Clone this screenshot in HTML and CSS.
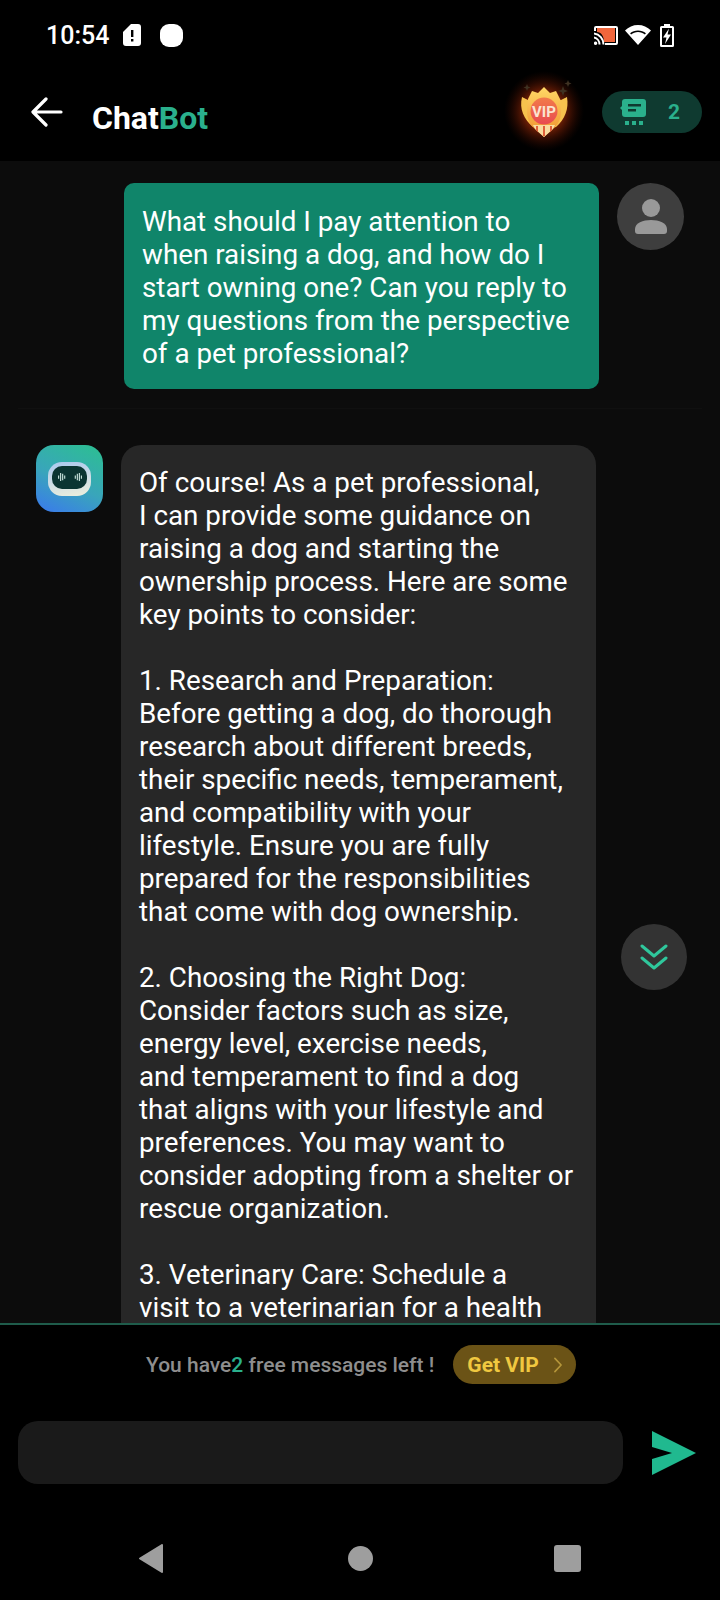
FILE: index.html
```html
<!DOCTYPE html>
<html lang="en">
<head>
  <meta charset="UTF-8">
  <meta name="viewport" content="width=device-width, initial-scale=1.0">
  <title>ChatBot</title>
  <link rel="stylesheet" href="styles.css">
</head>
<body>
  <div class="status-bar">
    <div class="status-left">
      <span class="clock">10:54</span>
      <svg class="sim-icon" viewBox="0 0 18 22"><path fill="#fff" fill-rule="evenodd" d="M8 0h7a3 3 0 0 1 3 3v16a3 3 0 0 1-3 3H3a3 3 0 0 1-3-3V8zM8 6v7h2.400V6zM8 15v2.600h2.400V15z"/></svg>
      <span class="notif-blob"></span>
    </div>
    <div class="status-right">
      <svg class="cast-icon" viewBox="0 0 24 19">
        <path fill="#f0663c" d="M3 2h18v14H10C10 10 7 6 3 6z"/>
        <path fill="none" stroke="#fff" stroke-width="2" d="M1 5V2a1 1 0 0 1 1-1h20a1 1 0 0 1 1 1v15a1 1 0 0 1-1 1H11"/>
        <path fill="none" stroke="#fff" stroke-width="2" d="M0 7.500a11 11 0 0 1 9.500 11M0 11.500a7 7 0 0 1 5.500 7"/>
        <circle cx="1.600" cy="17.200" r="1.700" fill="#fff"/>
      </svg>
      <svg class="wifi-icon" viewBox="0 0 26 20"><path fill="#fff" d="M13 20 0 5.500C3.500 2 8 0 13 0s9.500 2 13 5.500zM13 5.500c-3 0-5.700 1-7.900 2.800l1 1.100C8 7.900 10.400 7 13 7s5 .9 6.900 2.400l1-1.100C18.700 6.500 16 5.500 13 5.500z"/></svg>
      <svg class="battery-icon" viewBox="0 0 14 23">
        <path fill="#fff" d="M4 0h6v2h2.500A1.500 1.500 0 0 1 14 3.500v18a1.500 1.500 0 0 1-1.500 1.500h-11A1.500 1.500 0 0 1 0 21.500v-18A1.500 1.500 0 0 1 1.500 2H4z"/>
        <path fill="#000" d="M2 4h10v17H2z"/>
        <path fill="#fff" d="M9 4.500 3 13.500H6.500L5 20l6-9.500H7.500z"/>
      </svg>
    </div>
  </div>

  <header class="app-header">
    <svg class="back-arrow" viewBox="0 0 32 30"><path fill="none" stroke="#fff" stroke-width="3.200" stroke-linecap="round" stroke-linejoin="round" d="M30 15H3M15 2 2 15l13 13"/></svg>
    <h1 class="app-title">Chat<span class="accent">Bot</span></h1>
    <svg class="vip-badge" viewBox="0 0 80 80">
      <defs>
        <radialGradient id="vipGlow"><stop offset="0.450" stop-color="#c9380a" stop-opacity="0.600"/><stop offset="0.800" stop-color="#7a1c04" stop-opacity="0.220"/><stop offset="1" stop-color="#4a1002" stop-opacity="0"/></radialGradient>
        <linearGradient id="vipGold" x1="0" y1="0" x2="0" y2="1"><stop offset="0" stop-color="#ffd866"/><stop offset="1" stop-color="#f08f2c"/></linearGradient>
        <linearGradient id="vipCoin" x1="0" y1="0" x2="0" y2="1"><stop offset="0" stop-color="#f27b4a"/><stop offset="1" stop-color="#e84a50"/></linearGradient>
      </defs>
      <circle cx="40" cy="40" r="40" fill="url(#vipGlow)"/>
      <path fill="#f7c24e" d="M18 26l6 3 2-1c0 10 2 21 7 29l-4-1C20 48 15 38 18 26zM63 26l-6 3-2-1c0 10-2 21-7 29l4-1c9-8 13-18 11-30z"/>
      <path fill="url(#vipGold)" d="M40 16l6 6 6-2 4 8 1 13c0 7-3 12-6 15L40 66 29 56c-3-3-6-8-6-15l1-13 4-8 6 2z"/>
      <path fill="#f9dca0" d="M29 54h22l-2 4-9 8-9-8z"/>
      <path fill="#e0603a" d="M32 55h2v6l-2-2zM39 55h2v10h-2zM46 55h2v4l-2 2z"/>
      <circle cx="40" cy="40" r="13.500" fill="url(#vipCoin)"/>
      <text class="vip-text" x="40" y="45.500" text-anchor="middle">VIP</text>
      <path fill="#3f3222" d="M59 15l1.300 3.700 3.700 1.300-3.700 1.300-1.300 3.700-1.300-3.700-3.700-1.300 3.700-1.300zM64 9l1 2.500 2.500 1-2.500 1-1 2.500-1-2.500-2.500-1 2.500-1zM23 13l1 2.500 2.500 1-2.500 1-1 2.500-1-2.500-2.500-1 2.500-1z"/>
    </svg>
    <div class="credit-pill">
      <svg class="credit-icon" viewBox="0 0 26 26">
        <path fill="#2ab08c" d="M5 0h18a3 3 0 0 1 3 3v12a3 3 0 0 1-3 3H5a3 3 0 0 1-3-3v-4L0 9l2-2V3a3 3 0 0 1 3-3z"/>
        <path fill="#0f3a30" d="M8 5h13v2.500H8zM8 10h8v2.500H8z"/>
        <path fill="#2ab08c" d="M5 22h4v4H5zM12 22h4v4h-4zM19 22h4v4h-4z"/>
      </svg>
      <span class="credit-count">2</span>
    </div>
  </header>

  <main class="chat">
    <div class="msg-row user-row">
      <div class="bubble user-bubble">What should I pay attention to
when raising a dog, and how do I
start owning one? Can you reply to
my questions from the perspective
of a pet professional?</div>
      <div class="avatar user-avatar">
        <svg viewBox="0 0 32 35"><circle cx="16" cy="9" r="9" fill="#999"/><path fill="#999" d="M0 32v-2c0-6 8-9 16-9s16 3 16 9v2a3 3 0 0 1-3 3H3a3 3 0 0 1-3-3z"/></svg>
      </div>
    </div>

    <div class="chat-divider"></div>

    <div class="msg-row bot-row">
      <div class="avatar bot-avatar">
        <div class="bot-face">
          <div class="bot-screen">
            <svg viewBox="0 0 32 12"><path fill="none" stroke="#d6efe8" stroke-width="1.300" d="M2 4v4M4.500 1v10M7 2v8M9.500 4v4M22.500 4v4M25 2v8M27.500 1v10M30 4v4"/></svg>
          </div>
        </div>
      </div>
      <div class="bubble bot-bubble">Of course! As a pet professional,
I can provide some guidance on
raising a dog and starting the
ownership process. Here are some
key points to consider:

1. Research and Preparation:
Before getting a dog, do thorough
research about different breeds,
their specific needs, temperament,
and compatibility with your
lifestyle. Ensure you are fully
prepared for the responsibilities
that come with dog ownership.

2. Choosing the Right Dog:
Consider factors such as size,
energy level, exercise needs,
and temperament to find a dog
that aligns with your lifestyle and
preferences. You may want to
consider adopting from a shelter or
rescue organization.

3. Veterinary Care: Schedule a
visit to a veterinarian for a health</div>
    </div>

    <button class="scroll-down">
      <svg viewBox="0 0 28 28"><path fill="none" stroke="#2fc79c" stroke-width="3" stroke-linecap="round" stroke-linejoin="round" d="M2 3l12 10L26 3M2 15l12 10 12-10"/></svg>
    </button>
  </main>

  <footer class="composer">
    <div class="quota-row">
      <span class="quota-text">You have<span class="accent">2</span> free messages left !</span>
      <button class="vip-button">Get VIP
        <svg viewBox="0 0 10 18"><path fill="none" stroke="#b5963a" stroke-width="1.800" stroke-linecap="round" stroke-linejoin="round" d="M1.500 1.500 8.500 9l-7 7.500"/></svg>
      </button>
    </div>
    <div class="input-row">
      <div class="msg-input"></div>
      <svg class="send-icon" viewBox="0 0 44 44"><path fill="#20b98f" d="M0 0 44 22 0 44V28l20-6L0 16z"/></svg>
    </div>
  </footer>

  <nav class="nav-bar">
    <svg class="nav-back" viewBox="0 0 24 29"><path fill="#9e9e9e" stroke="#9e9e9e" stroke-width="2" stroke-linejoin="round" d="M23 1v27L1 14.500z"/></svg>
    <span class="nav-home"></span>
    <span class="nav-recent"></span>
  </nav>
</body>
</html>
```

FILE: styles.css
```css
body {
  font-family: 'Roboto', sans-serif;
  background-color: #000;
  margin: 0;
  width: 720px;
  height: 1600px;
  overflow: hidden;
  display: flex;
  flex-direction: column;
  color: #fff;
}

.accent {
  color: #2ab08c;
}

/* status bar */
.status-bar {
  height: 70px;
  display: flex;
  justify-content: space-between;
  align-items: center;
  padding: 0 46px 0 46px;
  flex-shrink: 0;
}

.status-left,
.status-right {
  display: flex;
  align-items: center;
}

.clock {
  font-size: 25px;
  font-weight: 500;
  width: 77px;
}

.sim-icon {
  width: 18px;
  height: 22px;
}

.notif-blob {
  width: 23px;
  height: 23px;
  margin-left: 19px;
  background-color: #fff;
  border-radius: 9px;
}

.cast-icon {
  width: 24px;
  height: 19px;
}

.wifi-icon {
  width: 26px;
  height: 20px;
  margin-left: 7px;
}

.battery-icon {
  width: 14px;
  height: 23px;
  margin-left: 9px;
}

/* header */
.app-header {
  height: 91px;
  display: flex;
  align-items: center;
  padding: 0 18px 0 31px;
  flex-shrink: 0;
}

.back-arrow {
  width: 32px;
  height: 30px;
  margin-bottom: 8px;
}

.app-title {
  margin: 4px 0 0 29px;
  font-size: 32px;
  font-weight: 700;
  line-height: 36px;
}

.vip-badge {
  width: 80px;
  height: 80px;
  margin-left: auto;
  margin-bottom: 10px;
}

.vip-text {
  font-family: 'Roboto', sans-serif;
  font-size: 15px;
  font-weight: 700;
  fill: #fbe3cf;
}

.credit-pill {
  width: 100px;
  height: 42px;
  margin-left: 18px;
  margin-bottom: 7px;
  box-sizing: border-box;
  padding-left: 18px;
  background-color: #0f3a30;
  border-radius: 21px;
  display: flex;
  align-items: center;
}

.credit-icon {
  width: 26px;
  height: 26px;
}

.credit-count {
  margin-left: 22px;
  font-size: 21px;
  font-weight: 700;
  color: #2ab08c;
}

/* chat */
.chat {
  height: 1164px;
  flex-shrink: 0;
  box-sizing: border-box;
  padding-top: 22px;
  background-color: #0c0c0c;
  border-bottom: 2px solid #1f5c4b;
  position: relative;
  overflow: hidden;
}

.msg-row {
  display: flex;
  align-items: flex-start;
}

.user-row {
  justify-content: flex-end;
  gap: 18px;
  padding-right: 36px;
}

.bot-row {
  gap: 18px;
  padding-left: 36px;
  margin-top: 36px;
}

.bubble {
  width: 475px;
  box-sizing: border-box;
  font-size: 27.8px;
  line-height: 33px;
  white-space: pre-line;
}

.user-bubble {
  padding: 22px 18px 19px;
  background-color: #10856a;
  border-radius: 10px;
}

.bot-bubble {
  padding: 21px 18px 40px;
  background-color: #272727;
  border-radius: 20px;
}

.avatar {
  width: 67px;
  height: 67px;
  flex-shrink: 0;
  display: flex;
  align-items: center;
  justify-content: center;
}

.user-avatar {
  background-color: #3e3e3e;
  border-radius: 50%;
}

.user-avatar svg {
  width: 32px;
  height: 35px;
}

.bot-avatar {
  background: linear-gradient(205deg, #2cc090, #39a5bb 55%, #3a78ee);
  border-radius: 18px;
}

.bot-face {
  width: 43px;
  height: 34px;
  box-sizing: border-box;
  padding: 4px 4px 7px;
  background: linear-gradient(170deg, #a9c8ee, #eef0dc);
  border-radius: 14px;
  display: flex;
}

.bot-screen {
  flex: 1;
  background-color: #0b3532;
  border-radius: 10px;
  display: flex;
  align-items: center;
  justify-content: center;
}

.bot-screen svg {
  width: 26px;
  height: 10px;
}

.chat-divider {
  margin: 19px 18px 0;
  height: 1px;
  background-color: #101010;
}

.scroll-down {
  position: absolute;
  top: 763px;
  left: 621px;
  width: 66px;
  height: 66px;
  padding: 0;
  border: none;
  border-radius: 50%;
  background-color: #333;
  display: flex;
  align-items: center;
  justify-content: center;
}

.scroll-down svg {
  width: 28px;
  height: 28px;
}

/* bottom composer */
.composer {
  flex-shrink: 0;
}

.quota-row {
  margin-top: 20px;
  height: 39px;
  display: flex;
  align-items: center;
  padding-left: 146px;
}

.quota-text {
  font-size: 21px;
  font-weight: 500;
  color: #8e8e8e;
}

.vip-button {
  margin-left: 19px;
  width: 123px;
  height: 39px;
  padding: 0 0 0 14px;
  border: none;
  border-radius: 20px;
  background-color: #6b5316;
  color: #f0c840;
  font-family: 'Roboto', sans-serif;
  font-size: 21px;
  font-weight: 700;
  display: flex;
  align-items: center;
  gap: 14px;
}

.vip-button svg {
  width: 10px;
  height: 16px;
}

.input-row {
  margin-top: 37px;
  display: flex;
  align-items: center;
  padding-left: 18px;
}

.msg-input {
  width: 605px;
  height: 63px;
  background-color: #1a1a1a;
  border-radius: 20px;
}

.send-icon {
  width: 44px;
  height: 44px;
  margin-left: 29px;
}

/* android nav */
.nav-bar {
  margin-top: 60px;
  height: 29px;
  display: flex;
  align-items: center;
  padding-left: 139px;
}

.nav-back {
  width: 24px;
  height: 29px;
}

.nav-home {
  width: 25px;
  height: 25px;
  margin-left: 185px;
  background-color: #9e9e9e;
  border-radius: 50%;
}

.nav-recent {
  width: 27px;
  height: 27px;
  margin-left: 181px;
  background-color: #9e9e9e;
  border-radius: 3px;
}
```
